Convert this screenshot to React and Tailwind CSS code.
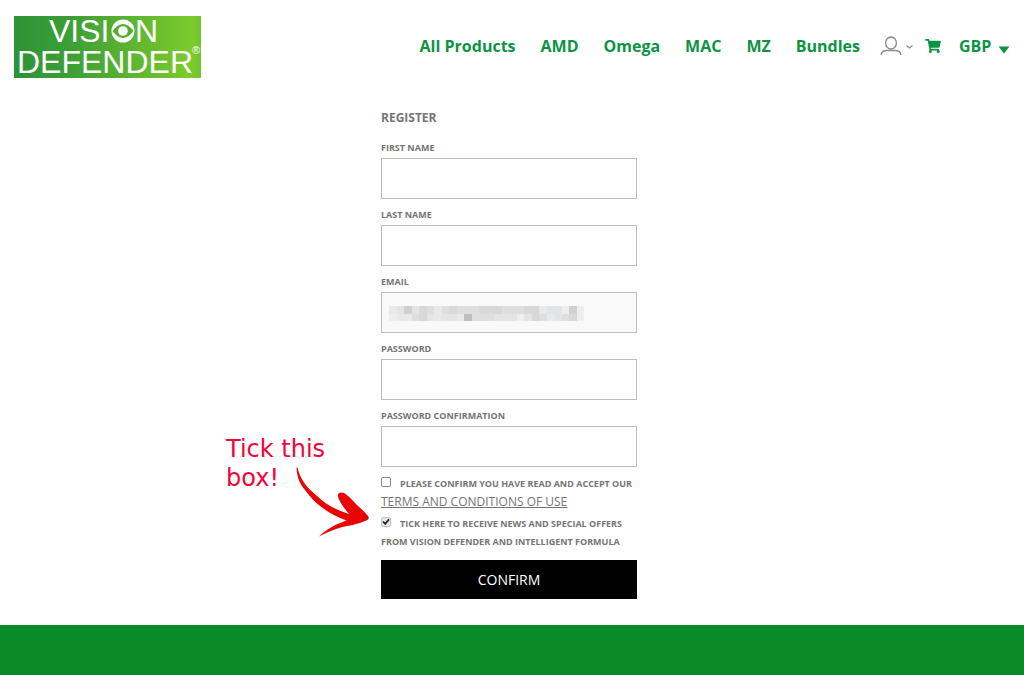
import { useState } from 'react'
import { FaShoppingCart } from 'react-icons/fa'

const navLinks = ['All Products', 'AMD', 'Omega', 'MAC', 'MZ', 'Bundles']

// One letter per block of the masked email, top row then bottom row
const mosaicRows = ['edadbcecbcccbbbcccbbeddfaf', 'feecbdeddezcccdddfdbcedcbf']
const mosaicColors = {
  a: '#d0d0d0',
  b: '#d9d8d7',
  c: '#dedede',
  d: '#e2e4e6',
  e: '#e8e9eb',
  f: '#efeeec',
  z: '#bfbfbf',
}

const Logo = () => (
  <svg className="overflow-visible" width="187" height="62" viewBox="0 0 187 62" role="img" aria-label="Vision Defender">
    <defs>
      <linearGradient id="logo-bg" x1="0" y1="0" x2="1" y2="0">
        <stop offset="0" stopColor="#2d9337" />
        <stop offset="0.3" stopColor="#3c9f35" />
        <stop offset="0.95" stopColor="#7ccb2c" />
        <stop offset="1" stopColor="#72c42d" />
      </linearGradient>
    </defs>
    <rect width="187" height="62" fill="url(#logo-bg)" />
    <g fill="#fff" fontFamily="Liberation Sans, sans-serif" fontSize="32">
      <text x="35" y="26">VISI</text>
      <text x="121" y="26">N</text>
      <text x="3" y="57">DEFENDER</text>
      <text x="178" y="38" fontSize="11">®</text>
    </g>
    <circle cx="109" cy="15" r="11.5" fill="#fff" />
    <path d="M98.5 15Q109 1 119.5 15Q109 29 98.5 15Z" fill="#55ae31" />
    <circle cx="109" cy="15" r="4.8" fill="#fff" />
  </svg>
)

const UserIcon = () => (
  <svg width="33" height="20" viewBox="0 0 33 20" fill="none" stroke="#8a8a8a" strokeWidth="1.3">
    <ellipse cx="11" cy="7" rx="5.4" ry="6" />
    <path d="M1 19C1.500 15.500 4 14.500 7 14.500H15C18 14.500 20.500 15.500 21 19" />
    <path d="M26.500 9.500L29.500 12L32.500 9.500" />
  </svg>
)

const Header = () => (
  <header className="flex items-center justify-between px-3.5 pt-4">
    <a href="#home">
      <Logo />
    </a>
    <nav className="flex items-center pb-0.5 text-base font-bold text-[#0c9444]">
      <div className="flex gap-[25px]">
        {navLinks.map((link) => (
          <a key={link} href="#shop">
            {link}
          </a>
        ))}
      </div>
      <a href="#account" aria-label="Account" className="ml-5">
        <UserIcon />
      </a>
      <a href="#cart" aria-label="Cart" className="ml-3">
        <FaShoppingCart className="h-3.5 w-4" />
      </a>
      <div className="relative ml-[18px]">
        <select aria-label="Currency" className="w-[51px] appearance-none bg-transparent font-bold">
          <option>GBP</option>
        </select>
        <svg className="pointer-events-none absolute right-0 bottom-1" width="12" height="8" viewBox="0 0 12 8" fill="currentColor">
          <path d="M0.500 0.500H11.500L6 7.500Z" />
        </svg>
      </div>
    </nav>
  </header>
)

const MaskedEmail = () => (
  <svg className="pointer-events-none absolute bottom-3 left-2" width="195" height="15" viewBox="0 0 195 15" shapeRendering="crispEdges">
    {mosaicRows.map((row, y) =>
      row.split('').map((shade, x) => (
        <rect key={`${x}-${y}`} x={x * 7.5} y={y * 7.5} width="7.5" height="7.5" fill={mosaicColors[shade]} />
      ))
    )}
  </svg>
)

const Field = ({ id, label, type = 'text', masked = false }) => (
  <div className="relative">
    <label htmlFor={id} className="block text-[9px]/5 font-bold">
      {label}
    </label>
    <input
      id={id}
      type={type}
      readOnly={masked}
      className="block h-[41px] w-full border border-[#bdbdbd] px-2 text-sm read-only:bg-[#f9f9f9]"
    />
    {masked && <MaskedEmail />}
  </div>
)

const Checkbox = ({ id, checked, onChange }) => (
  <span className="relative mr-[9px] inline-block size-2.5 align-baseline">
    <input
      id={id}
      type="checkbox"
      checked={checked}
      onChange={(e) => onChange(e.target.checked)}
      className="block size-2.5 appearance-none rounded-xs border border-[#8a8a8a] bg-white checked:border-[#c4c4c4] checked:bg-[#e6e6e6]"
    />
    {checked && (
      <svg className="pointer-events-none absolute inset-0" width="10" height="10" viewBox="0 0 10 10" fill="none" stroke="#222" strokeWidth="1.8">
        <path d="M2 4.500L4.200 6.800L8 2.200" />
      </svg>
    )}
  </span>
)

const TickHint = () => (
  <div className="pointer-events-none absolute -top-10 -left-[155px] w-[155px]">
    <p className="w-28 font-['DejaVu_Sans',sans-serif] text-2xl/[29px] font-normal text-[#f0063c]">Tick this box!</p>
    <svg className="absolute top-8 right-3" width="73" height="70" viewBox="0 0 73 70" fill="#e80505">
      <path d="M0.500 0.500C1 11 4 17 9 23C16 33 29 46 50.500 53.500C40 57 31 62 23 69.500C33 64 44 60 54 58.500C61 57 68 55 72 52.500Q73.500 51 72 49C68 44 64 41 60.500 37.500C56 33 53 29 49 26.500C45 24 41 26 42 29.500C43 34 48 41 53 47C40 43 29 37 20.500 28.500C11 21 4 12 1.500 0.500Z" />
    </svg>
  </div>
)

const App = () => {
  const [accepted, setAccepted] = useState(false)
  const [offers, setOffers] = useState(true)

  return (
    <div className="bg-white font-['Open_Sans',sans-serif] text-[#757575]">
      <Header />
      <main className="flex justify-center pt-8 pr-1.5 pb-[26px]">
        <form className="w-64" onSubmit={(e) => e.preventDefault()}>
          <h1 className="mb-3 text-xs font-bold">REGISTER</h1>
          <div className="flex flex-col gap-1.5">
            <Field id="first-name" label="FIRST NAME" />
            <Field id="last-name" label="LAST NAME" />
            <Field id="email" label="EMAIL" type="email" masked />
            <Field id="password" label="PASSWORD" type="password" />
            <Field id="password-confirmation" label="PASSWORD CONFIRMATION" type="password" />
          </div>
          <div className="relative mt-2 text-[9px]/[18px] font-bold">
            <TickHint />
            <div className="whitespace-nowrap">
              <Checkbox id="terms" checked={accepted} onChange={setAccepted} />
              <label htmlFor="terms">PLEASE CONFIRM YOU HAVE READ AND ACCEPT OUR</label>
            </div>
            <a href="#terms-of-use" className="block text-xs/[18px] font-normal underline">
              TERMS AND CONDITIONS OF USE
            </a>
            <div className="mt-1">
              <Checkbox id="offers" checked={offers} onChange={setOffers} />
              <label htmlFor="offers">
                TICK HERE TO RECEIVE NEWS AND SPECIAL OFFERS FROM VISION DEFENDER AND INTELLIGENT FORMULA
              </label>
            </div>
          </div>
          <button type="submit" className="mt-[9px] h-[39px] w-full bg-black text-sm text-white">
            CONFIRM
          </button>
        </form>
      </main>
      <footer className="h-[50px] bg-[#0a8a28]" />
    </div>
  )
}

export default App
